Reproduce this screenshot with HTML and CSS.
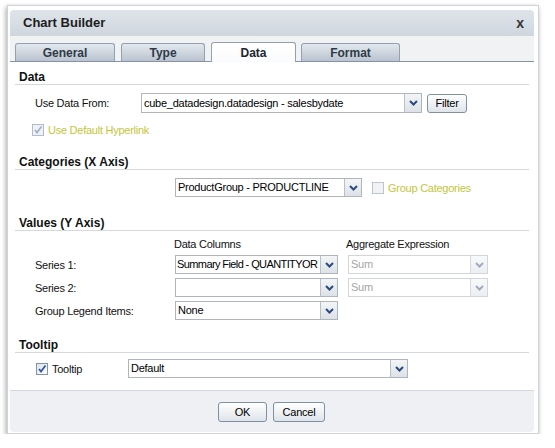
FILE: index.html
```html
<!DOCTYPE html>
<html>
<head>
<meta charset="utf-8">
<link rel="stylesheet" href="styles.css">
</head>
<body>
<div class="dialog">
  <div class="panel">
    <div class="titlebar">
      <span class="title">Chart Builder</span>
      <span class="close">x</span>
    </div>
    <div class="tabs">
      <div class="tab tab-general">General</div>
      <div class="tab tab-type">Type</div>
      <div class="tab tab-data active">Data</div>
      <div class="tab tab-format">Format</div>
    </div>
    <div class="content">
      <div class="section-head h-data">Data</div>
      <div class="row r-source">
        <span class="lbl lbl-source">Use Data From:</span>
        <div class="select sel-source">
          <span class="val">cube_datadesign.datadesign - salesbydate</span>
          <span class="arrow"><svg width="9" height="6" viewBox="0 0 9 6"><path d="M1 1 L4.5 4.5 L8 1" fill="none" stroke="#2c4a7e" stroke-width="2"/></svg></span>
        </div>
        <button class="btn btn-filter">Filter</button>
      </div>
      <div class="row r-hyper">
        <span class="chk chk-dis"><svg width="12" height="12" viewBox="0 0 12 12"><rect x="0.5" y="0.5" width="11" height="11" fill="#eef1f5" stroke="#b3bcc8"/><path d="M3 6 L5 8.5 L9.5 2.5" fill="none" stroke="#a4b2c8" stroke-width="1.7"/></svg></span>
        <span class="dis-text">Use Default Hyperlink</span>
      </div>

      <div class="section-head h-cat">Categories (X Axis)</div>
      <div class="row r-cat">
        <div class="select sel-cat">
          <span class="val">ProductGroup - PRODUCTLINE</span>
          <span class="arrow"><svg width="9" height="6" viewBox="0 0 9 6"><path d="M1 1 L4.5 4.5 L8 1" fill="none" stroke="#2c4a7e" stroke-width="2"/></svg></span>
        </div>
        <span class="chk chk-group"><svg width="12" height="12" viewBox="0 0 12 12"><rect x="0.5" y="0.5" width="11" height="11" fill="#f1f2f4" stroke="#bfc5cd"/></svg></span>
        <span class="dis-text">Group Categories</span>
      </div>

      <div class="section-head h-val">Values (Y Axis)</div>
      <div class="values-grid">
        <span></span>
        <span class="col-head">Data Columns</span>
        <span class="col-head col-agg">Aggregate Expression</span>

        <span class="lbl">Series 1:</span>
        <div class="select sel-col">
          <span class="val val-tight">Summary Field - QUANTITYOR</span>
          <span class="arrow"><svg width="9" height="6" viewBox="0 0 9 6"><path d="M1 1 L4.5 4.5 L8 1" fill="none" stroke="#2c4a7e" stroke-width="2"/></svg></span>
        </div>
        <div class="select sel-agg disabled">
          <span class="val">Sum</span>
          <span class="arrow"><svg width="9" height="6" viewBox="0 0 9 6"><path d="M1 1 L4.5 4.5 L8 1" fill="none" stroke="#9eabbd" stroke-width="2"/></svg></span>
        </div>

        <span class="lbl">Series 2:</span>
        <div class="select sel-col">
          <span class="val"></span>
          <span class="arrow"><svg width="9" height="6" viewBox="0 0 9 6"><path d="M1 1 L4.5 4.5 L8 1" fill="none" stroke="#2c4a7e" stroke-width="2"/></svg></span>
        </div>
        <div class="select sel-agg disabled">
          <span class="val">Sum</span>
          <span class="arrow"><svg width="9" height="6" viewBox="0 0 9 6"><path d="M1 1 L4.5 4.5 L8 1" fill="none" stroke="#9eabbd" stroke-width="2"/></svg></span>
        </div>

        <span class="lbl">Group Legend Items:</span>
        <div class="select sel-col">
          <span class="val">None</span>
          <span class="arrow"><svg width="9" height="6" viewBox="0 0 9 6"><path d="M1 1 L4.5 4.5 L8 1" fill="none" stroke="#2c4a7e" stroke-width="2"/></svg></span>
        </div>
        <span></span>
      </div>

      <div class="section-head h-tip">Tooltip</div>
      <div class="row r-tip">
        <span class="chk chk-tip"><svg width="12" height="12" viewBox="0 0 12 12"><defs><linearGradient id="cg" x1="0" y1="0" x2="1" y2="1"><stop offset="0" stop-color="#dde3ea"/><stop offset="1" stop-color="#ffffff"/></linearGradient></defs><rect x="0.5" y="0.5" width="11" height="11" fill="url(#cg)" stroke="#8292a8"/><path d="M3 6 L5 8.5 L9.5 2.5" fill="none" stroke="#2f5aa8" stroke-width="1.8"/></svg></span>
        <span class="lbl lbl-tip">Tooltip</span>
        <div class="select sel-tip">
          <span class="val">Default</span>
          <span class="arrow"><svg width="9" height="6" viewBox="0 0 9 6"><path d="M1 1 L4.5 4.5 L8 1" fill="none" stroke="#2c4a7e" stroke-width="2"/></svg></span>
        </div>
      </div>
    </div>
    <div class="footer">
      <button class="btn btn-ok">OK</button>
      <button class="btn btn-cancel">Cancel</button>
    </div>
  </div>
</div>
</body>
</html>
```
FILE: styles.css
```css
* { box-sizing: border-box; }
html, body { margin: 0; padding: 0; background: #ffffff; }
body {
  font-family: "Liberation Sans", Arial, sans-serif;
  font-size: 11px;
  color: #000;
  letter-spacing: -0.25px;
}
.dialog {
  margin: 5px 0 0 7px;
  width: 532px;
  height: 429px;
  background: #fff;
  border: 1px solid #cfd2d6;
  box-shadow: -1px 2px 5px rgba(0,0,0,0.35);
  padding: 4px 4px 1px 2px;
}
.panel {
  width: 524px;
  height: 422px;
  display: flex;
  flex-direction: column;
}
.titlebar {
  height: 26px;
  flex: none;
  background: linear-gradient(#dfe4ea, #cfd6de);
  border-radius: 4px 4px 0 0;
  display: flex;
  align-items: center;
  justify-content: space-between;
  padding: 0 10px 1px 13px;
}
.title {
  font-weight: bold;
  font-size: 13px;
  color: #1d1d1d;
  letter-spacing: 0;
}
.close {
  font-weight: bold;
  font-size: 14px;
  color: #333;
  letter-spacing: 0;
}
.tabs {
  height: 26px;
  flex: none;
  background: #f0f2f4;
  border-bottom: 1px solid #8593a7;
  display: flex;
  align-items: flex-end;
  gap: 6px;
  padding-left: 5px;
}
.tab {
  height: 18px;
  border: 1px solid #93a0b2;
  border-bottom: none;
  border-radius: 3px 3px 0 0;
  background: linear-gradient(#e3e8ee, #b9c3cf);
  font-weight: bold;
  font-size: 12px;
  color: #2e3a48;
  letter-spacing: 0;
  display: flex;
  align-items: center;
  justify-content: center;
  padding-top: 1px;
}
.tab-general { width: 100px; }
.tab-type { width: 84px; }
.tab-data { width: 85px; }
.tab-format { width: 99px; margin-left: -1px; }
.tab.active {
  height: 20px;
  margin-bottom: -1px;
  background: linear-gradient(#ffffff, #fafbfc);
  color: #1e2530;
}
.content {
  flex: 1;
  background: #fff;
  padding: 0 5px;
}
.section-head {
  height: 17px;
  padding: 2px 0 0 4px;
  line-height: 14px;
  border-bottom: 1px solid #d3d9e0;
  font-weight: bold;
  font-size: 12px;
  letter-spacing: 0;
  color: #111;
}
.h-data { margin-top: 6px; }
.h-cat { margin-top: 15px; }
.h-val { margin-top: 17px; }
.h-tip { margin-top: 16px; }
.row {
  display: flex;
  align-items: center;
}
.lbl { color: #111; }
.r-source { margin-top: 8px; height: 20px; padding-left: 20px; }
.lbl-source { width: 106px; }
.select {
  height: 19px;
  border: 1px solid #aeb5bf;
  background: #fff;
  display: flex;
  align-items: stretch;
}
.select .val {
  flex: 1;
  padding-left: 2px;
  line-height: 17px;
  white-space: nowrap;
  overflow: hidden;
}
.select .val-tight { letter-spacing: -0.6px; padding-left: 1px; }
.select .arrow {
  width: 17px;
  flex: none;
  border-left: 1px solid #b8bfc8;
  background: linear-gradient(#f3f5f7, #dde2e8);
  display: flex;
  align-items: center;
  justify-content: center;
}
.sel-source { width: 281px; height: 20px; }
.sel-source .val { line-height: 18px; }
.btn {
  font-family: "Liberation Sans", Arial, sans-serif;
  font-size: 11px;
  letter-spacing: -0.2px;
  color: #000;
  height: 20px;
  border: 1px solid #7c90a8;
  border-radius: 3px;
  background: linear-gradient(#ffffff, #dfe4ea);
  padding: 0;
  margin: 0;
}
.btn-filter { width: 40px; height: 19px; margin-left: 5px; }
.r-hyper { margin-top: 9px; height: 16px; padding-left: 17px; }
.chk { display: flex; width: 12px; height: 12px; }
.dis-text { color: #c5c53a; margin-left: 4px; }
.r-cat { margin-top: 8px; height: 19px; padding-left: 160px; }
.sel-cat { width: 187px; }
.chk-group { margin-left: 10px; }
.values-grid {
  margin-top: 6px;
  padding-left: 20px;
  display: grid;
  grid-template-columns: 140px 173px 140px;
  grid-template-rows: 14px 19px 19px 19px;
  row-gap: 4px;
  align-items: center;
}
.col-head { margin-left: -1px; color: #111; }
.col-agg { margin-left: -2px; }
.sel-col { width: 163px; }
.sel-agg { width: 140px; }
.select.disabled { border-color: #d2d6db; }
.select.disabled .val { color: #a5a5a5; }
.select.disabled .arrow {
  border-left-color: #d6dade;
  background: linear-gradient(#f8f9fa, #eceff2);
}
.r-tip { margin-top: 6px; height: 19px; padding-left: 21px; }
.lbl-tip { margin-left: 4px; width: 76px; }
.sel-tip { width: 280px; }
.footer {
  height: 42px;
  flex: none;
  background: #eef0f3;
  border-top: 1px solid #d3d8de;
  border-radius: 0 0 4px 4px;
  display: flex;
  justify-content: center;
  align-items: flex-start;
  gap: 6px;
  padding-top: 11px;
  padding-right: 1px;
}
.btn-ok { width: 49px; }
.btn-cancel { width: 52px; }
```
